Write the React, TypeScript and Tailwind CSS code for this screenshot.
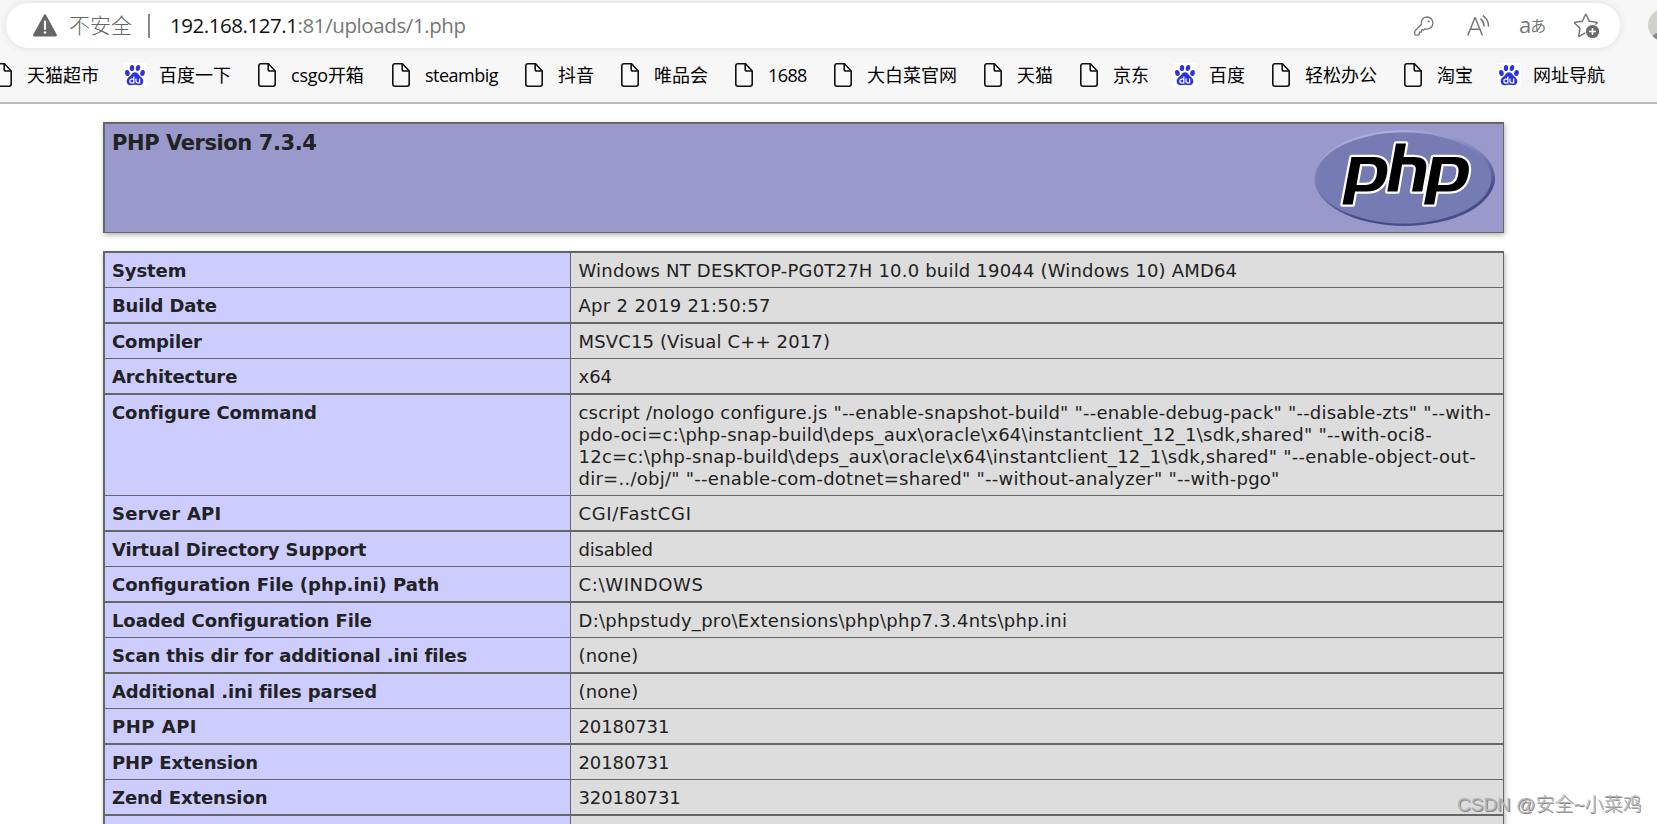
import type { ReactNode } from 'react';

type Bookmark = {
  label: string;
  icon: 'file' | 'baidu';
  fit?: string;
};

type InfoRow = {
  name: string;
  value: string;
  nameTracking?: string;
  tracking?: string;
};

const BOOKMARKS: Bookmark[] = [
  { label: '天猫超市', icon: 'file' },
  { label: '百度一下', icon: 'baidu' },
  { label: 'csgo开箱', icon: 'file', fit: 'w-[74px] tracking-[-0.2px]' },
  { label: 'steambig', icon: 'file', fit: 'w-[73px] tracking-[-0.5px]' },
  { label: '抖音', icon: 'file' },
  { label: '唯品会', icon: 'file' },
  { label: '1688', icon: 'file', fit: 'w-[39px] tracking-[-0.6px]' },
  { label: '大白菜官网', icon: 'file' },
  { label: '天猫', icon: 'file' },
  { label: '京东', icon: 'file' },
  { label: '百度', icon: 'baidu' },
  { label: '轻松办公', icon: 'file' },
  { label: '淘宝', icon: 'file' },
  { label: '网址导航', icon: 'baidu' },
];

const ROWS: InfoRow[] = [
  {
    name: 'System',
    value: 'Windows NT DESKTOP-PG0T27H 10.0 build 19044 (Windows 10) AMD64',
    tracking: 'tracking-[0.19px]',
  },
  { name: 'Build Date', value: 'Apr 2 2019 21:50:57', tracking: 'tracking-[0.31px]' },
  { name: 'Compiler', value: 'MSVC15 (Visual C++ 2017)', tracking: 'tracking-[0.14px]' },
  { name: 'Architecture', value: 'x64' },
  {
    name: 'Configure Command',
    value: [
      'cscript /nologo configure.js "--enable-snapshot-build" "--enable-debug-pack" "--disable-zts" "--with-',
      'pdo-oci=c:\\php-snap-build\\deps_aux\\oracle\\x64\\instantclient_12_1\\sdk,shared" "--with-oci8-',
      '12c=c:\\php-snap-build\\deps_aux\\oracle\\x64\\instantclient_12_1\\sdk,shared" "--enable-object-out-',
      'dir=../obj/" "--enable-com-dotnet=shared" "--without-analyzer" "--with-pgo"',
    ].join('\n'),
    tracking: 'tracking-[0.26px] first-line:tracking-[0.21px]',
  },
  { name: 'Server API', value: 'CGI/FastCGI', nameTracking: 'tracking-[0.25px]', tracking: 'tracking-[0.66px]' },
  { name: 'Virtual Directory Support', value: 'disabled', tracking: 'tracking-[-0.2px]' },
  {
    name: 'Configuration File (php.ini) Path',
    value: 'C:\\WINDOWS',
    nameTracking: 'tracking-[0px]',
    tracking: 'tracking-[0.66px]',
  },
  {
    name: 'Loaded Configuration File',
    value: 'D:\\phpstudy_pro\\Extensions\\php\\php7.3.4nts\\php.ini',
    tracking: 'tracking-[0.29px]',
  },
  { name: 'Scan this dir for additional .ini files', value: '(none)', tracking: 'tracking-[0.15px]' },
  { name: 'Additional .ini files parsed', value: '(none)', tracking: 'tracking-[0.15px]' },
  { name: 'PHP API', value: '20180731', nameTracking: 'tracking-[0.5px]', tracking: 'tracking-[-0.1px]' },
  { name: 'PHP Extension', value: '20180731', tracking: 'tracking-[-0.1px]' },
  { name: 'Zend Extension', value: '320180731', tracking: 'tracking-[-0.1px]' },
  { name: '', value: '' },
];

function FileIcon() {
  return (
    <svg viewBox="0 0 24 24" className="size-6 shrink-0" fill="none" stroke="#111" strokeWidth="1.6">
      <path d="M13.5 .8H6Q3.8 .8 3.8 3v18Q3.8 23.2 6 23.2h12q2.2 0 2.2-2.2V8z" fill="#f9f9f9" />
      <path d="M13.2 1v5.2q0 1.8 1.8 1.8h5.2" />
    </svg>
  );
}

function BaiduIcon() {
  return (
    <svg viewBox="0 0 24 24" className="size-6 shrink-0">
      <rect width="24" height="24" rx="2" fill="#fff" />
      <g fill="#2a32e1">
        <ellipse cx="4.4" cy="10" rx="2.3" ry="3" transform="rotate(-12 4.4 10)" />
        <ellipse cx="9" cy="5" rx="2.2" ry="3.1" />
        <ellipse cx="15" cy="5" rx="2.2" ry="3.1" transform="rotate(8 15 5)" />
        <ellipse cx="19.5" cy="10" rx="2.3" ry="3" transform="rotate(10 19.5 10)" />
        <path d="M12 9.3c2 0 3 1.3 4 2.7 1.2 1.6 4.3 3 4.3 6.2 0 2.6-1.8 4-4 4-1.5 0-2.8-.5-4.3-.5s-2.7.5-4.2.5c-2.4 0-4.1-1.6-4.1-4 0-3.2 3-4.4 4.3-6.2 1-1.4 2-2.7 4-2.7z" />
      </g>
      <g fill="none" stroke="#fff" strokeWidth="1.3">
        <path d="M10.8 13.5v6.4H8.7q-1.8 0-1.8-1.9t1.8-1.9h2.1" />
        <path d="M13 15.5v2.8q0 1.6 1.6 1.6h2v-4.4" />
      </g>
    </svg>
  );
}

function WarningIcon() {
  return (
    <svg viewBox="0 0 24 24" className="size-6">
      <path d="M10.8 1.2q1.2-1.8 2.4 0l10.4 19q1 2.3-1.3 2.3H1.7Q-.6 22.5.4 20.2z" fill="#666" />
      <path d="M12 7.5V15" stroke="#fff" strokeWidth="2.2" strokeLinecap="round" />
      <circle cx="12" cy="18.5" r="1.3" fill="#fff" />
    </svg>
  );
}

function KeyIcon() {
  return (
    <svg viewBox="0 0 20 20" className="size-5" fill="none" stroke="#767676" strokeWidth="1.3" strokeLinejoin="round">
      <path d="M12.9 1a6 6 0 0 1 0 12.1c-.7 0-1.4-.1-2-.3L9.6 14H7.5v2.2H5.3v1.9q0 1-1 1H1.7q-1 0-1-1v-2.4q0-.6.4-1l6.3-6.2C6.5 4.5 9 1 12.9 1z" />
      <circle cx="14.7" cy="5.5" r="1.1" fill="#767676" stroke="none" />
    </svg>
  );
}

function ReadAloudIcon() {
  return (
    <svg viewBox="0 0 24 22" className="h-[22px] w-6" fill="none" stroke="#767676" strokeWidth="1.5" strokeLinecap="round">
      <path d="M1 20 7.8 3h.6l6.8 17M3.5 14.3h9.3" />
      <path d="M13.8 4.2q3.2 2.5 3.2 6.8M16.3.9q5.2 4 5.2 10" />
    </svg>
  );
}

function StarIcon() {
  return (
    <svg viewBox="0 0 26 26" className="size-[26px]" fill="none">
      <path
        d="M11.3 1.8q.5-1 1 0l3 6.5 7.2.9q1 .2.3 1l-5.2 5.1 1.3 7.3q.1 1-.8.5L11.8 19.6l-6.2 3.5q-1 .4-.8-.6L6 15.3.8 10.2q-.7-.8.3-1l7.2-.9z"
        stroke="#767676"
        strokeWidth="1.5"
      />
      <circle cx="18.5" cy="18.5" r="7.5" fill="#fff" />
      <circle cx="18.5" cy="18.5" r="6.6" fill="#6b6b6b" />
      <path d="M18.5 15v7M15 18.5h7" stroke="#fff" strokeWidth="1.6" />
    </svg>
  );
}

function PhpLogo() {
  return (
    <svg viewBox="0 0 181 96" className="h-24 w-[181px]">
      <defs>
        <linearGradient id="rim" x1="0.3" y1="0" x2="0.7" y2="1">
          <stop offset="0" stopColor="#b3b4dd" />
          <stop offset="0.45" stopColor="#777bb3" />
          <stop offset="0.75" stopColor="#484c89" />
        </linearGradient>
      </defs>
      <ellipse cx="90.5" cy="48" rx="90.5" ry="48" fill="url(#rim)" />
      <ellipse cx="89.5" cy="48" rx="88" ry="45.5" fill="#777bb3" />
      <g
        transform="translate(-.5 -.4)"
        stroke="#fff"
        strokeWidth="4.5"
        fill="#000"
        fillRule="evenodd"
        paintOrder="stroke"
        strokeLinejoin="round"
      >
        <path d="M82.5 14h10l-2.4 13.5h9.5c11 0 14.7 4 12.9 13.5L108.7 62H98.5l3.6-20c.8-4.8-.4-7-5-7h-8.5L84 62H73.8z" />
        <path d="M38 27.5h22c11 0 15.5 6 13.5 16.5C71.5 56 65 62 53 62H41.5l-2.3 13H29zM46.7 34.5 43 55.5h8.7c6.8 0 10.3-3.5 11.6-11 1.2-7-1-10-7.500-10z" />
        <path d="M119.5 27.5h22c11 0 15.5 6 13.5 16.5C153 56 146.5 62 134.5 62H123l-2.3 13h-10.2zM128.2 34.5l-3.7 21h8.7c6.8 0 10.3-3.5 11.6-11 1.2-7-1-10-7.500-10z" />
      </g>
    </svg>
  );
}

function AddressBar() {
  return (
    <div className="flex h-[51px] items-start pt-[3px]">
      <div className="ml-1.5 flex h-[45px] w-[1614px] shrink-0 items-center rounded-full bg-white pl-[27px] pr-5 shadow-[0_0_8px_rgba(0,0,0,0.1)]">
        <WarningIcon />
        <span className="ml-3 w-[67px] whitespace-nowrap text-[21px] font-light text-[#666]">不安全</span>
        <span className="ml-3 h-6 w-0.5 bg-[#8a8a8a]" />
        <span className="ml-5 whitespace-nowrap text-[20.5px] tracking-[-0.4px] text-[#767676]">
          <span className="tracking-[-0.45px] text-[#111]">192.168.127.1</span>:81/uploads/1.php
        </span>
        <div className="ml-auto flex items-center">
          <KeyIcon />
          <span className="ml-[33px]">
            <ReadAloudIcon />
          </span>
          <span className="ml-7 flex h-7 w-[27px] items-start whitespace-nowrap text-[#767676]">
            <span className="-mt-0.5 text-[22px] leading-7">a</span>
            <span className="-ml-px text-[16px] leading-7">あ</span>
          </span>
          <span className="ml-7">
            <StarIcon />
          </span>
        </div>
      </div>
      <div className="ml-7 mt-1.5 size-8 shrink-0 overflow-hidden rounded-full bg-[#d2d2cd]">
        <div className="ml-1 mt-6 h-3 w-8 rounded-full bg-[#888]" />
      </div>
    </div>
  );
}

function BookmarkBar() {
  return (
    <div className="-ml-[9px] flex h-[51px] items-start gap-6 pt-3">
      {BOOKMARKS.map((bookmark) => (
        <div key={bookmark.label} className="flex shrink-0 items-center gap-3">
          {bookmark.icon === 'file' ? <FileIcon /> : <BaiduIcon />}
          <span className={`whitespace-nowrap text-lg leading-6 text-black ${bookmark.fit ?? ''}`}>
            {bookmark.label}
          </span>
        </div>
      ))}
    </div>
  );
}

function Panel({ children }: { children: ReactNode }) {
  return (
    <div className="w-[1401px] border-l-2 border-t-2 border-r border-[#666] shadow-[1px_2px_5px_rgba(0,0,0,0.3)]">
      {children}
    </div>
  );
}

export default function App() {
  return (
    <div className="h-[824px] w-full overflow-hidden bg-white">
      <header className="h-[104px] overflow-hidden border-b-2 border-[#bababa] bg-[#f7f7f7] font-['Open_Sans','Noto_Sans_CJK_SC',sans-serif]">
        <AddressBar />
        <BookmarkBar />
      </header>

      <main className="ml-[103px] flex flex-col gap-[18px] pt-[18px] font-['DejaVu_Sans',sans-serif] text-[#222]">
        <Panel>
          <div className="flex h-[109px] justify-between border-b border-[#666] bg-[#9999cc] pl-[7px] pr-2 pt-1.5">
            <h1 className="text-[21px] leading-[26px] font-bold tracking-[-0.42px]">PHP Version 7.3.4</h1>
            <PhpLogo />
          </div>
        </Panel>

        <Panel>
          {ROWS.map((row, index) => (
            <div
              key={row.name}
              className={`box-content flex min-h-[34px] border-[#666] text-[18px] leading-[22px] ${
                index % 2 === 0 ? 'border-b' : 'border-b-2'
              }`}
            >
              <div
                className={`w-[466px] shrink-0 border-r border-[#666] bg-[#ccccff] px-[7px] pt-[7px] pb-[5px] font-bold ${
                  row.nameTracking ?? 'tracking-[-0.1px]'
                }`}
              >
                {row.name}
              </div>
              <div className={`flex-1 whitespace-pre bg-[#dddddd] pt-[7px] pb-[5px] pl-[7.5px] ${row.tracking ?? ''}`}>
                {row.value}
              </div>
            </div>
          ))}
        </Panel>
      </main>

      <div className="absolute left-[1457px] top-[791px] whitespace-nowrap font-['Liberation_Sans','Noto_Sans_CJK_SC',sans-serif] text-[19px] leading-7 font-light text-[#b4b4b4] [text-shadow:1px_1px_0_#888]">
        CSDN @安全~小菜鸡
      </div>
    </div>
  );
}
